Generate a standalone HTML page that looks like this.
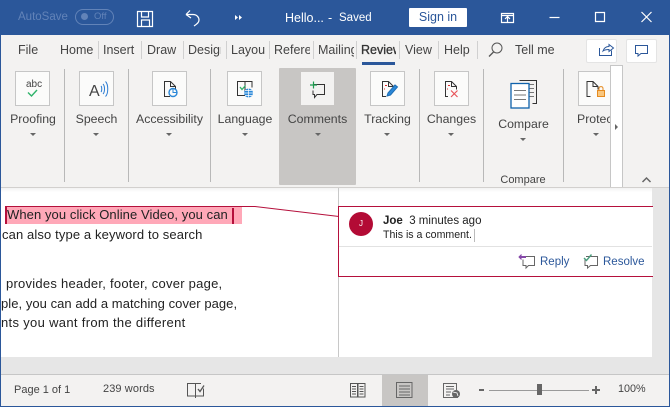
<!DOCTYPE html>
<html><head><meta charset="utf-8">
<style>
html,body{margin:0;padding:0;width:670px;height:407px;overflow:hidden;background:#f3f2f1}
#r{position:relative;width:670px;height:407px;overflow:hidden;font-family:"Liberation Sans",sans-serif;color:#444}
#r div{position:absolute;white-space:nowrap}
.tab{top:43px;font-size:12.5px;color:#444;line-height:15px}
.sep{top:41px;width:1px;height:18px;background:#d0d0d0}
.vs{top:69px;width:1px;height:113px;background:#b8b8b8}
.box{top:71px;width:33px;height:33px;border:1px solid #c6c6c6;background:#fbfbfa}
.lab{top:111px;font-size:12.3px;color:#444;line-height:16px;text-align:center}
.car{width:0;height:0;border-left:3px solid transparent;border-right:3px solid transparent;border-top:3px solid #666}
.doc{font-size:13px;color:#222;line-height:16px}
svg{position:absolute;overflow:visible}
</style></head><body><div id="r">
<div style="left:0;top:0;width:670px;height:35px;background:#2b579a"></div>
<div style="left:18px;top:10px;font-size:11.5px;color:#6283b8;line-height:15px">AutoSave</div>
<div style="left:75px;top:9px;width:37px;height:14px;border:1px solid #6283b8;border-radius:8px"></div>
<div style="left:81px;top:13px;width:7px;height:7px;border-radius:50%;background:#6283b8"></div>
<div style="left:94px;top:10px;font-size:9.5px;color:#6283b8;line-height:14px">Off</div>
<svg style="left:0;top:0" width="670" height="35" fill="none" stroke="#fff" stroke-width="1.2">
<path d="M137.500 11.500h15v15h-15zM141.500 11.500v5.500h7v-5.500M141.500 26.500v-6.500h8v6.500"/>
<path d="M186 14.500l4-4M186 14.500l5 3.500M186.500 14.500h6.500c4 0 6 3 6 5.500c0 2-1 3.500-5 6"/>
<path d="M235 15v5l3-2.500zM239 15v5l3-2.500z" fill="#fff" stroke="none"/>
<path d="M501.500 13.500h12v9h-12zM501.500 15.500h12M507.500 22v-5M505 19l2.500-2.500l2.500 2.500"/>
<path d="M549.500 17.500h10"/>
<path d="M595.500 12.500h9v9h-9z"/>
<path d="M641.500 12l10 10M651.500 12l-10 10"/>
</svg>
<div style="left:285px;top:10px;font-size:12.5px;color:#fff;line-height:16px">Hello...</div>
<div style="left:328px;top:10px;font-size:12.5px;color:#fff;line-height:16px">-</div>
<div style="left:339px;top:10px;font-size:11.5px;color:#fff;line-height:16px">Saved</div>
<div style="left:409px;top:8px;width:58px;height:19px;background:#fff;border-radius:1px;color:#2b579a;font-size:12.5px;line-height:19px;text-align:center">Sign in</div>

<div style="left:0;top:35px;width:670px;height:30px;background:#f3f2f1"></div>
<div class="tab" style="left:18px">File</div>
<div class="tab" style="left:60px">Home</div><div class="sep" style="left:98px"></div>
<div class="tab" style="left:103px">Insert</div><div class="sep" style="left:141px"></div>
<div class="tab" style="left:147px">Draw</div><div class="sep" style="left:183px"></div>
<div class="tab" style="left:188px;width:33px;overflow:hidden">Design</div><div class="sep" style="left:226px"></div>
<div class="tab" style="left:231px;width:34px;overflow:hidden">Layout</div><div class="sep" style="left:269px"></div>
<div class="tab" style="left:274px;width:36px;overflow:hidden">References</div><div class="sep" style="left:313px"></div>
<div class="tab" style="left:318px;width:36px;overflow:hidden">Mailings</div><div class="sep" style="left:356px"></div>
<div class="tab" style="left:361px;width:35px;overflow:hidden;color:#333;-webkit-text-stroke:.3px #333">Review</div><div class="sep" style="left:399px"></div>
<div style="left:362px;top:62px;width:33px;height:3px;background:#2b579a"></div>
<div class="tab" style="left:405px">View</div><div class="sep" style="left:438px"></div>
<div class="tab" style="left:444px">Help</div><div class="sep" style="left:477px"></div>
<div class="tab" style="left:515px">Tell me</div>
<svg style="left:0;top:35px" width="670" height="30" fill="none" stroke="#555" stroke-width="1">
<circle cx="497" cy="13" r="5"/><path d="M493.500 17l-4.500 4.500" stroke-width="1.300"/>
</svg>
<div style="left:586px;top:39px;width:29px;height:22px;background:#fff;border:1px solid #e4e4e4;border-radius:2px"></div>
<div style="left:626px;top:39px;width:29px;height:22px;background:#fff;border:1px solid #e4e4e4;border-radius:2px"></div>
<svg style="left:0;top:0" width="670" height="65" fill="none" stroke="#2b579a" stroke-width="1">
<path d="M599.500 48v7.500h12v-5M603 51c1-3 3-4.500 6-4.500v-2l4.500 3.500l-4.500 3.500v-2c-2 0-4 0-6 1.500z"/>
<path d="M635.500 45.500h12v8h-6.500l-3 2.500v-2.500h-2.500z"/>
</svg>

<div style="left:0;top:65px;width:670px;height:122px;background:#f3f2f1"></div>
<div style="left:279px;top:68px;width:77px;height:117px;background:#c8c6c4;border-radius:1px"></div>

<div class="vs" style="left:64px"></div><div class="vs" style="left:128px"></div><div class="vs" style="left:210px"></div>
<div class="vs" style="left:419px"></div><div class="vs" style="left:483px"></div><div class="vs" style="left:563px"></div>

<div class="box" style="left:15px"></div>
<div class="box" style="left:79px"></div>
<div class="box" style="left:152px"></div>
<div class="box" style="left:227px"></div>
<div style="left:301px;top:72px;width:33px;height:33px;background:#f3f2f1"></div>
<div class="box" style="left:370px"></div>
<div class="box" style="left:434px"></div>
<div class="box" style="left:578px"></div>

<div style="left:26px;top:79px;font-size:10px;color:#444;line-height:12px">abc</div>
<div style="left:89px;top:83px;font-size:16px;color:#444;line-height:18px">A</div>
<svg style="left:0;top:0" width="670" height="190" fill="none" stroke="#333" stroke-width="1">
<path d="M28 92.500l3.500 3.500l5.500-6" stroke="#2fb36a" stroke-width="1.400"/>
<path d="M101 86c1 1 1 5 0 6M103 84c2 2 2 8 0 10M105.500 81.500c3 3 3 12 0 15" stroke="#2b7cd3"/>
<path d="M170 96.500h-5.500v-15h6l5 5v3M170.500 81.500v5h5"/>
<circle cx="173" cy="92.500" r="4" stroke="#2b88d8" stroke-width="1.400"/><path d="M173 88v4.500h4.500" stroke="#2b88d8"/>
<path d="M237.500 81.500h7.500v14h-7.500zM245 81.500h7v6M245 95.500h2"/>
<path d="M240 87l2 2.500l3.500-4" stroke="#2fb36a" stroke-width="1.300"/>
<circle cx="248.500" cy="93" r="4.500" fill="#2b88d8" stroke="none"/><path d="M244 93h9M248.500 88.500v9M245 90.500h7M245 95.500h7" stroke="#fff" stroke-width=".7"/>
<path d="M313 84.500h11.500v10h-7.500l-2.500 3v-3h-1.500v-4"/><path d="M310 85h7M313.500 81.500v7" stroke="#1c9a4e" stroke-width="1.200"/>
<path d="M386 96.500h-3.500v-15h6l5 5v1.500M388.500 81.500v5h5"/>
<path d="M385 85.500h2M384 89h1" stroke="#e02b2b"/>
<path d="M387 96l1-3l7-8l2.500 2l-7 8z" fill="#2b88d8" stroke="#1f6fb5"/>
<path d="M448 96.500h-2.500v-15h6l5 5v3M451.500 81.500v5h5"/>
<path d="M448 85.500h2M447 89h1" stroke="#e02b2b"/>
<path d="M451 90.500l6.500 6.500M457.500 90.500l-6.500 6.500" stroke="#e8555a" stroke-width="1.200"/>
<path d="M519.500 80.500h17v23h-4"/><path d="M529 84.500h5M529 88.500h5M529 92.500h5M529 96.500h5" stroke="#777"/>
<rect x="511" y="83.500" width="18" height="24.500" fill="#fff" stroke="#0f62ac" stroke-width="1.300"/>
<path d="M514 90.500h12M514 95h12M514 99.500h12" stroke="#777"/>
<path d="M590.500 96.500h-3.500v-15h6l5 5v3M593 81.500v5h5"/>
<rect x="597.500" y="90.500" width="7" height="6" fill="#f9c77f" stroke="#e58a1f"/><path d="M599 90.500v-2c0-2.500 4-2.500 4 0v2" stroke="#e58a1f"/>
</svg>

<div class="lab" style="left:1px;width:64px">Proofing</div>
<div class="lab" style="left:65px;width:63px">Speech</div>
<div class="lab" style="left:129px;width:81px">Accessibility</div>
<div class="lab" style="left:211px;width:68px">Language</div>
<div class="lab" style="left:279px;width:77px">Comments</div>
<div class="lab" style="left:356px;width:63px">Tracking</div>
<div class="lab" style="left:420px;width:63px">Changes</div>
<div class="lab" style="left:484px;top:116px;width:79px">Compare</div>
<div class="lab" style="left:500px;top:172px;width:46px;font-size:11px">Compare</div>
<div class="lab" style="left:577px;width:33px;overflow:hidden;text-align:left">Protect</div>

<div class="car" style="left:30px;top:133px"></div>
<div class="car" style="left:93px;top:133px"></div>
<div class="car" style="left:166px;top:133px"></div>
<div class="car" style="left:242px;top:133px"></div>
<div class="car" style="left:315px;top:133px"></div>
<div class="car" style="left:384px;top:133px"></div>
<div class="car" style="left:448px;top:133px"></div>
<div class="car" style="left:520px;top:138px"></div>
<div class="car" style="left:593px;top:133px"></div>

<div style="left:610px;top:65px;width:11px;height:122px;background:#fff;border:1px solid #c6c6c6;border-bottom:0"></div>
<div style="left:615px;top:124px;width:0;height:0;border-top:3px solid transparent;border-bottom:3px solid transparent;border-left:3px solid #666"></div>
<svg style="left:0;top:0" width="670" height="190" fill="none"><path d="M642.500 182l4-4l4 4" stroke="#666" stroke-width="1.500"/></svg>

<div style="left:0;top:187px;width:670px;height:1px;background:#d2d0ce"></div>
<div style="left:652px;top:188px;width:18px;height:186px;background:#e6e6e6"></div>
<div style="left:0;top:188px;width:652px;height:169px;background:#fff"></div>
<div style="left:0;top:188px;width:652px;height:4px;background:linear-gradient(#f2f2f2,#fff)"></div>
<div style="left:0;top:357px;width:670px;height:17px;background:#e6e6e6"></div>
<div style="left:0;top:374px;width:670px;height:1px;background:#c6c6c6"></div>
<div style="left:338px;top:188px;width:1px;height:169px;background:#c8c8c8"></div>

<div style="left:5px;top:206px;width:237px;height:18px;background:#ffa8b8"></div>
<div style="left:5px;top:206px;width:2px;height:18px;background:#b5103c"></div>
<div style="left:232px;top:208px;width:2px;height:16px;background:#b5103c"></div>
<svg style="left:0;top:0" width="670" height="407" fill="none"><path d="M5 206.500h250l84 10" stroke="#b5103c" stroke-width="1"/></svg>
<div class="doc" style="left:7px;top:207px;letter-spacing:.08px">When you click Online Video, you can</div>
<div class="doc" style="left:2px;top:227px;letter-spacing:.12px">can also type a keyword to search</div>
<div class="doc" style="left:6px;top:276px;letter-spacing:.25px">provides header, footer, cover page,</div>
<div class="doc" style="left:1px;top:296px;letter-spacing:.05px">ple, you can add a matching cover page,</div>
<div class="doc" style="left:1px;top:315px;letter-spacing:.32px">nts you want from the different</div>

<div style="left:338px;top:206px;width:314px;height:69px;border:1px solid #b5103c;border-right:0;background:#fff"></div>
<div style="left:339px;top:246px;width:313px;height:1px;background:#e2e2e2"></div>
<div style="left:349px;top:212px;width:24px;height:24px;border-radius:50%;background:#b30b35;color:#fff;font-size:8px;line-height:24px;text-align:center">J</div>
<div style="left:383px;top:214px;font-size:11.5px;line-height:15px;color:#222"><b>Joe</b>&nbsp; 3 minutes ago</div>
<div style="left:383px;top:228px;font-size:10.6px;line-height:14px;color:#222">This is a comment.</div>
<div style="left:474px;top:229px;width:1px;height:13px;background:#bbb"></div>
<svg style="left:0;top:0" width="670" height="407" fill="none" stroke="#666" stroke-width="1">
<path d="M525 256.500h9.500v9h-6l-2.500 2.500v-2.500h-3v-6"/><path d="M521 257h5" stroke="#8548a8" stroke-width="2"/><path d="M521.500 254.500l-2.500 2.500l2.500 2.500" fill="#8548a8" stroke="#8548a8"/>
<path d="M586 256.500h11.500v9h-7l-3 2.500v-2.500h-2.500v-7"/><path d="M584 258l2.500 2.500l5-6" stroke="#4a9e7d" stroke-width="1.400"/>
</svg>
<div style="left:540px;top:254px;font-size:11.5px;line-height:16px;color:#2b579a">Reply</div>
<div style="left:603px;top:254px;font-size:11.5px;line-height:16px;color:#2b579a">Resolve</div>

<div style="left:0;top:375px;width:670px;height:31px;background:#f3f2f1"></div>
<div style="left:14px;top:383px;font-size:11px;line-height:15px;color:#444">Page 1 of 1</div>
<div style="left:103px;top:382px;font-size:11px;line-height:15px;color:#444;letter-spacing:.1px">239 words</div>
<div style="left:382px;top:375px;width:46px;height:31px;background:#c8c6c4"></div>
<svg style="left:0;top:0" width="670" height="407" fill="none" stroke="#555" stroke-width="1">
<path d="M195.500 396h-8v-12.500h8zM195.500 396v2M195.500 396h8v-7.500M196 383.500h5"/><path d="M198 389l2 2.500l4-6" stroke-width="1.300"/>
<path d="M350.500 383.500h7v13.500h-7zM358 383.500h7v13.500h-7zM352 386.500h4M352 389h4M352 391.500h4M352 394h4M359.500 386.500h4M359.500 389h4M359.500 391.500h4M359.500 394h4"/>
<path d="M396.500 382.500h15.500v15h-15.500zM399 386h11M399 389h11M399 392h11M399 395h11" stroke="#666"/>
<path d="M458 397.500h-14.500v-14h13v7M446 386.500h8M446 389h8M446 392h5M446 395h4" stroke="#666"/>
<circle cx="456" cy="394" r="4" fill="#666" stroke="none"/><path d="M453 392l4 1l1 3" stroke="#fff" stroke-width=".8"/>
</svg>
<div style="left:479px;top:389px;width:5px;height:2px;background:#666"></div>
<div style="left:489px;top:390px;width:100px;height:1px;background:#9a9a9a"></div>
<div style="left:537px;top:384px;width:5px;height:11px;background:#666"></div>
<div style="left:592px;top:389px;width:8px;height:2px;background:#666"></div>
<div style="left:595px;top:386px;width:2px;height:8px;background:#666"></div>
<div style="left:618px;top:382px;font-size:10.8px;line-height:15px;color:#444">100%</div>

<div style="left:0;top:0;width:1px;height:407px;background:#2b579a"></div>
<div style="left:669px;top:0;width:1px;height:407px;background:#2b579a"></div>
<div style="left:0;top:406px;width:670px;height:1px;background:#2b579a"></div>
</div></body></html>
